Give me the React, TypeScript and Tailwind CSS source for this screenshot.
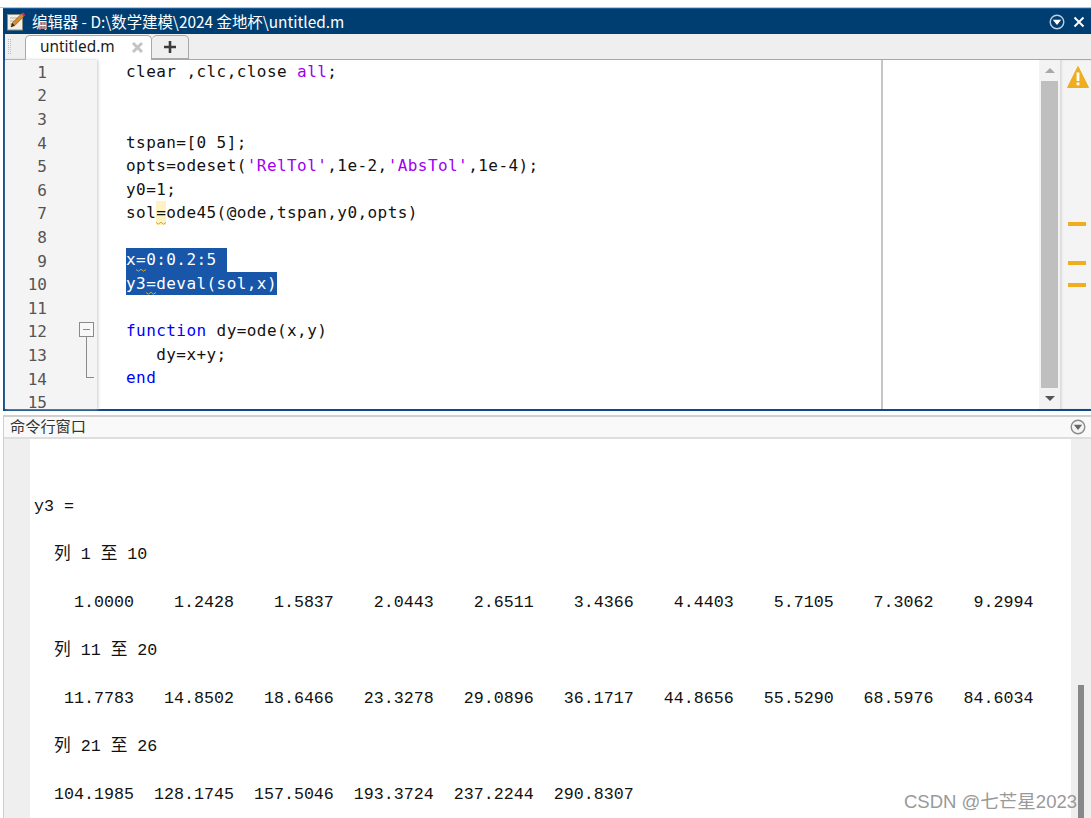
import type { ReactNode } from "react";

const kw = "text-[#0000ff]";
const str = "text-[#a000f0]";

const Squiggle = ({ left, width = 10 }: { left: number; width?: number }) => (
  <svg
    className="absolute bottom-0"
    style={{ left }}
    width={width}
    height="4"
    viewBox="0 0 10 4"
  >
    <path d="M0 1.5 L2.5 3.2 L5 1.2 L7.5 3.2 L10 1.5" fill="none" stroke="#c9a84a" strokeWidth="1" />
  </svg>
);

const codeLines: ReactNode[] = [
  <>clear ,clc,close <span className={str}>all</span>;</>,
  "",
  "",
  "tspan=[0 5];",
  <>opts=odeset(<span className={str}>'RelTol'</span>,1e-2,<span className={str}>'AbsTol'</span>,1e-4);</>,
  "y0=1;",
  <>sol<span className="relative inline-block bg-[#fff3c4]">=<Squiggle left={0} /></span>ode45(@ode,tspan,y0,opts)</>,
  "",
  <span className="relative inline-block bg-[#1756a9] text-white">x=0:0.2:5 <Squiggle left={10} /></span>,
  <span className="relative inline-block bg-[#1756a9] text-white">y3=deval(sol,x)<Squiggle left={20} /></span>,
  "",
  <><span className={kw}>function</span> dy=ode(x,y)</>,
  "   dy=x+y;",
  <span className={kw}>end</span>,
  "",
];

const cmdLines = [
  "",
  "",
  "y3 =",
  "",
  "  列 1 至 10",
  "",
  "    1.0000    1.2428    1.5837    2.0443    2.6511    3.4366    4.4403    5.7105    7.3062    9.2994",
  "",
  "  列 11 至 20",
  "",
  "   11.7783   14.8502   18.6466   23.3278   29.0896   36.1717   44.8656   55.5290   68.5976   84.6034",
  "",
  "  列 21 至 26",
  "",
  "  104.1985  128.1745  157.5046  193.3724  237.2244  290.8307",
];

const DropCircle = ({ light }: { light?: boolean }) => (
  <svg width="16" height="16" viewBox="0 0 16 16">
    <circle cx="8" cy="8" r="6.8" fill={light ? "none" : "#f4f4f4"} stroke={light ? "#bcd0e0" : "#8c8c8c"} strokeWidth="1.4" />
    <path d="M3.8 5.8 H12.2 L8 11 Z" fill={light ? "#ffffff" : "#666666"} />
  </svg>
);

const EditorIcon = () => (
  <svg width="19" height="19" viewBox="0 0 19 19">
    <rect x="0.5" y="2.5" width="15" height="15.5" fill="#f3efe2" stroke="#8b8b8b" />
    <path d="M3 6 H12 M3 9 H10 M3 12 H8" stroke="#b9b4a4" strokeWidth="1" />
    <path d="M4 15 L5.2 11 L14.5 1.8 L17 4.2 L7.8 13.5 Z" fill="#d98a2b" stroke="#7a4a18" strokeWidth="0.6" />
    <path d="M14.5 1.8 L16 0.6 L18.4 2.9 L17 4.2 Z" fill="#c2366a" />
    <path d="M4 15 L5.2 11 L7.8 13.5 Z" fill="#2b2b2b" />
  </svg>
);

const App = () => {
  return (
    <div className="relative flex h-[818px] w-[1091px] flex-col overflow-hidden bg-white font-['Liberation_Sans',sans-serif]">
      <div className="h-[8px] shrink-0 border-b border-[#c4c4c4] bg-white" />

      {/* Editor */}
      <div className="ml-[3px] flex h-[403px] shrink-0 flex-col border-b-2 border-l-2 border-[#0f4a88]">
        <div className="-ml-[2px] flex h-[26px] shrink-0 items-center border-t border-[#1a5a96] bg-[#003e71] pl-[4px] pr-[5px] text-white">
          <EditorIcon />
          <span className="ml-[6px] font-['Noto_Sans_CJK_SC','Noto_Sans',sans-serif] text-[15.4px] leading-none">
            编辑器 - D:\数学建模\2024 金地杯\untitled.m
          </span>
          <div className="ml-auto flex items-center gap-[7px]">
            <DropCircle light />
            <svg width="14" height="14" viewBox="0 0 14 14">
              <path d="M2.5 2.5 L11.5 11.5 M11.5 2.5 L2.5 11.5" stroke="#ffffff" strokeWidth="1.9" />
            </svg>
          </div>
        </div>

        <div className="flex h-[26px] shrink-0 items-end border-b border-[#a8a8a8] bg-[#efefef] pl-[3px]">
          <div className="mb-[5px] h-[15px] w-[3px] border-x border-dotted border-[#bdbdbd]" />
          <div className="relative top-px ml-[14px] flex h-[25px] w-[127px] items-center rounded-t-[5px] border border-b-0 border-[#a8a8a8] bg-white pb-[2px] pl-[14px]">
            <span className="font-['Noto_Sans',sans-serif] text-[15.4px] text-[#1a1a1a]">untitled.m</span>
            <svg className="ml-auto mr-[7px]" width="13" height="13" viewBox="0 0 13 13">
              <path d="M2 2 L11 11 M11 2 L2 11" stroke="#c4c4c4" strokeWidth="3" />
            </svg>
          </div>
          <div className="flex h-[24px] w-[37px] items-center justify-center rounded-t-[5px] border border-l-0 border-[#a8a8a8] bg-[#efefef]">
            <svg width="14" height="14" viewBox="0 0 14 14">
              <path d="M7 1 V13 M1 7 H13" stroke="#3c3c3c" strokeWidth="2.6" />
            </svg>
          </div>
        </div>

        <div className="flex min-h-0 flex-1 bg-white">
          {/* gutter */}
          <div className="relative w-[92px] shrink-0 overflow-hidden bg-[#f4f4f4] pt-[1px] font-['DejaVu_Sans_Mono',monospace] text-[16px] text-[#555555] shadow-[1px_0_3px_#c8c8c8]">
            {codeLines.map((_, i) => (
              <div key={i} className="flex h-[23.6px] w-[42px] items-center justify-end leading-none">
                {i + 1}
              </div>
            ))}
            <div className="absolute left-[74px] top-[262px] flex h-[15px] w-[15px] items-center justify-center border border-[#8a8a8a] bg-[#f8f8f8]">
              <div className="h-px w-[7px] bg-[#8a8a8a]" />
            </div>
            <div className="absolute left-[81px] top-[277px] h-[41px] w-[8px] border-b border-l border-[#8a8a8a]" />
          </div>

          {/* code */}
          <div className="w-[786px] shrink-0 overflow-hidden border-r-2 border-[#c6c6c6] pl-[29px] font-['DejaVu_Sans_Mono',monospace] text-[16px] tracking-[0.43px] text-[#111111]">
            {codeLines.map((line, i) => (
              <div key={i} className="flex h-[23.55px] items-center whitespace-pre leading-[23.55px]">
                {line}
              </div>
            ))}
          </div>

          <div className="flex-1" />

          {/* scrollbar */}
          <div className="flex w-[21px] shrink-0 flex-col items-center bg-[#f3f3f3] px-[2px]">
            <div className="flex h-[21px] w-full items-center justify-center">
              <div className="h-0 w-0 border-x-[5px] border-b-[5px] border-x-transparent border-b-[#a8a8a8]" />
            </div>
            <div className="w-full flex-1 bg-[#bfbfbf]" />
            <div className="flex h-[21px] w-full items-center justify-center">
              <div className="h-0 w-0 border-x-[5px] border-t-[5px] border-x-transparent border-t-[#555555]" />
            </div>
          </div>

          {/* message bar */}
          <div className="relative w-[31px] shrink-0 bg-[#f4f4f4] shadow-[inset_2px_0_2px_#dcdcdc]">
            <svg className="absolute left-[7px] top-[6px]" width="22" height="22" viewBox="0 0 22 22">
              <path d="M11 0.5 L21.5 21.5 H0.5 Z" fill="#f0ae1e" stroke="#f0ae1e" strokeLinejoin="round" />
              <rect x="9.6" y="6.5" width="2.8" height="8.5" fill="#ffffff" />
              <rect x="9.6" y="16.5" width="2.8" height="2.8" fill="#ffffff" />
            </svg>
            <div className="absolute left-[8px] top-[162px] h-[4px] w-[18px] bg-[#f0ae1e]" />
            <div className="absolute left-[8px] top-[201px] h-[4px] w-[18px] bg-[#f0ae1e]" />
            <div className="absolute left-[8px] top-[223px] h-[4px] w-[18px] bg-[#f0ae1e]" />
          </div>
        </div>
      </div>

      {/* Command window */}
      <div className="ml-[3px] mt-[4px] flex min-h-0 flex-1 flex-col border-l border-t-2 border-[#d0d0d0]">
        <div className="flex h-[22px] shrink-0 items-center border-b-2 border-[#dedede] bg-[#f9f9f9] pb-[2px] pl-[6px] pr-[5px]">
          <span className="font-['Noto_Sans_CJK_SC',sans-serif] text-[15.2px] leading-none text-[#333333]">命令行窗口</span>
          <div className="ml-auto pt-[2px]">
            <DropCircle />
          </div>
        </div>
        <div className="flex min-h-0 flex-1">
          <div className="w-[26px] shrink-0 bg-[#efefef]" />
          <div className="w-[1041px] shrink-0 overflow-hidden bg-white pl-[4px] pt-[8px] font-['Liberation_Mono','Noto_Sans_CJK_SC',monospace] text-[16.67px] text-[#111111]">
            {cmdLines.map((line, i) => (
              <div key={i} className="h-[24px] whitespace-pre leading-[24px]">
                {line}
              </div>
            ))}
          </div>
          <div className="flex flex-1 items-end bg-[#efefef] pl-[7px]">
            <div className="h-[133px] w-[6px] bg-[#888888]" />
          </div>
        </div>
      </div>

      <div className="absolute left-[904px] top-[788px] font-['Liberation_Sans','Noto_Sans_CJK_SC',sans-serif] text-[18.5px] text-[#8f8f8f] opacity-90">
        CSDN @七芒星2023
      </div>
    </div>
  );
};

export default App;
